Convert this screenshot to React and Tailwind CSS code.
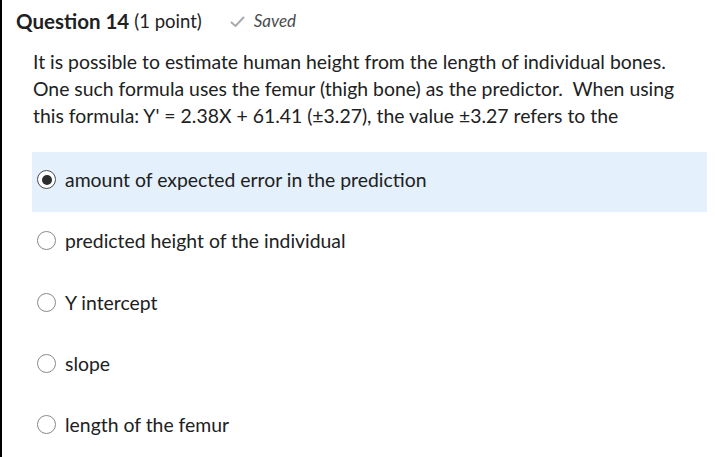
import React from "react";

const options = [
  "amount of expected error in the prediction",
  "predicted height of the individual",
  "Y intercept",
  "slope",
  "length of the femur",
];

function Radio({ checked }) {
  return (
    <span
      className={
        "flex h-[19px] w-[19px] shrink-0 items-center justify-center rounded-full border bg-white " +
        (checked ? "border-[#494c4e]" : "border-[#868a8e]")
      }
    >
      {checked && <span className="h-[10px] w-[10px] rounded-full bg-[#2a2c2e]" />}
    </span>
  );
}

export default function App() {
  return (
    <div
      className="h-[457px] w-[715px] overflow-hidden border-l-2 border-black bg-white text-[#202122]"
      style={{ fontFamily: "Lato, 'Open Sans', sans-serif" }}
    >
      <div className="flex items-center pl-[14px] pt-[9px] leading-[24px]">
        <span className="text-[20.5px] font-bold">Question 14</span>
        <span className="ml-[5px] text-[18.5px]">(1 point)</span>
        <svg className="ml-[28px] mt-[1px]" width="15" height="12" viewBox="0 0 15 12">
          <path d="M1.5 6.5 L5.5 10 L13.5 1.5" fill="none" stroke="#a8acb0" strokeWidth="2" strokeLinecap="round" strokeLinejoin="round" />
        </svg>
        <span className="ml-[9px] text-[17px] italic text-[#494c4e]">Saved</span>
      </div>
      <p className="ml-[31px] mt-[15px] text-[19.4px] leading-[27px]">
        It is possible to estimate human height from the length of individual bones.
        <br />
        One such formula uses the femur (thigh bone) as the predictor.&nbsp; When using
        <br />
        this formula: Y' = 2.38X + 61.41 (±3.27), the value ±3.27 refers to the
      </p>
      <div className="ml-[30px] mr-[8px] mt-[23px] flex flex-col gap-[1.25px]">
        {options.map((o, i) => (
          <div
            key={o}
            className={
              "flex h-[60px] items-start gap-[9px] pl-[5px] pt-[16px] text-[19.4px] leading-[24px] " +
              (i === 0 ? "bg-[#e4f0fb]" : "")
            }
          >
            <span className="mt-[2px]">
              <Radio checked={i === 0} />
            </span>
            <span>{o}</span>
          </div>
        ))}
      </div>
    </div>
  );
}
